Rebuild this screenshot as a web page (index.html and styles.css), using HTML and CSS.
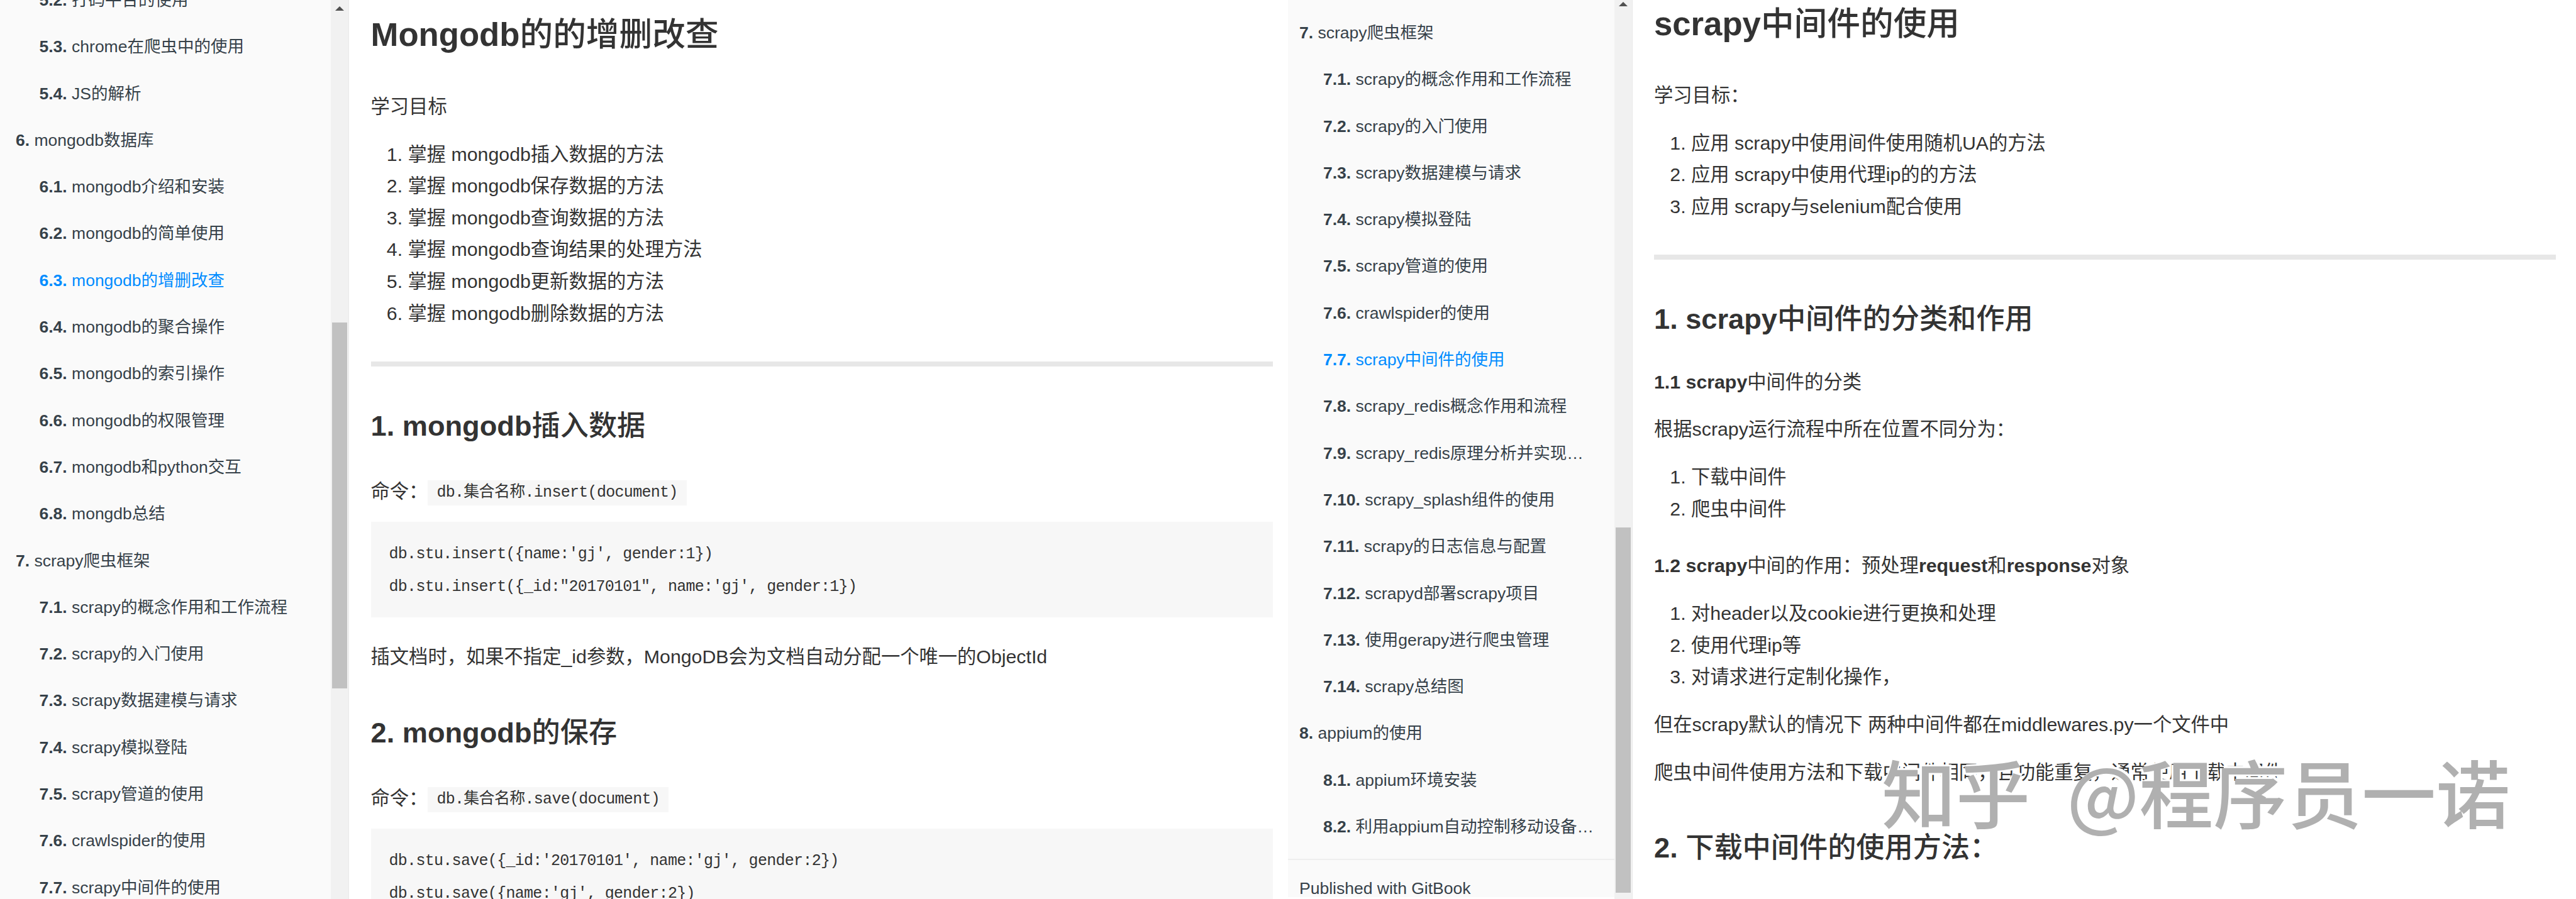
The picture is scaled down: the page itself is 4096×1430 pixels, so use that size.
FILE: index.html
```html
<!DOCTYPE html>
<html lang="zh">
<head>
<meta charset="utf-8">
<title>GitBook</title>
<link rel="stylesheet" href="styles.css">
</head>
<body>
<div class="page">
  <nav class="sidebar sidebar-left">
    <ul class="toc toc-left">
      <li class="sub"><b>5.2.</b> 打码平台的使用</li>
      <li class="sub"><b>5.3.</b> chrome在爬虫中的使用</li>
      <li class="sub"><b>5.4.</b> JS的解析</li>
      <li class="top"><b>6.</b> mongodb数据库</li>
      <li class="sub"><b>6.1.</b> mongodb介绍和安装</li>
      <li class="sub"><b>6.2.</b> mongodb的简单使用</li>
      <li class="sub active"><b>6.3.</b> mongodb的增删改查</li>
      <li class="sub"><b>6.4.</b> mongodb的聚合操作</li>
      <li class="sub"><b>6.5.</b> mongodb的索引操作</li>
      <li class="sub"><b>6.6.</b> mongodb的权限管理</li>
      <li class="sub"><b>6.7.</b> mongodb和python交互</li>
      <li class="sub"><b>6.8.</b> mongdb总结</li>
      <li class="top"><b>7.</b> scrapy爬虫框架</li>
      <li class="sub"><b>7.1.</b> scrapy的概念作用和工作流程</li>
      <li class="sub"><b>7.2.</b> scrapy的入门使用</li>
      <li class="sub"><b>7.3.</b> scrapy数据建模与请求</li>
      <li class="sub"><b>7.4.</b> scrapy模拟登陆</li>
      <li class="sub"><b>7.5.</b> scrapy管道的使用</li>
      <li class="sub"><b>7.6.</b> crawlspider的使用</li>
      <li class="sub"><b>7.7.</b> scrapy中间件的使用</li>
    </ul>
  </nav>
  <div class="track track-left"><i class="arrow arrow-left"></i><i class="thumb thumb-left"></i></div>

  <main class="content content-left">
    <h1>Mongodb<span class="cn">的的增删改查</span></h1>
    <p>学习目标</p>
    <ol class="goals">
      <li>掌握 mongodb插入数据的方法</li>
      <li>掌握 mongodb保存数据的方法</li>
      <li>掌握 mongodb查询数据的方法</li>
      <li>掌握 mongodb查询结果的处理方法</li>
      <li>掌握 mongodb更新数据的方法</li>
      <li>掌握 mongodb删除数据的方法</li>
    </ol>
    <hr>
    <h2>1. mongodb<span class="cn">插入数据</span></h2>
    <p class="before-pre">命令：<code>db.集合名称.insert(document)</code></p>
    <pre>db.stu.insert({name:'gj', gender:1})
db.stu.insert({_id:"20170101", name:'gj', gender:1})</pre>
    <p class="before-h2">插文档时，如果不指定_id参数，MongoDB会为文档自动分配一个唯一的ObjectId</p>
    <h2>2. mongodb<span class="cn">的保存</span></h2>
    <p class="before-pre">命令：<code>db.集合名称.save(document)</code></p>
    <pre>db.stu.save({_id:'20170101', name:'gj', gender:2})
db.stu.save({name:'gj', gender:2})</pre>
  </main>

  <nav class="sidebar sidebar-mid">
    <ul class="toc toc-mid">
      <li class="top"><b>7.</b> scrapy爬虫框架</li>
      <li class="sub"><b>7.1.</b> scrapy的概念作用和工作流程</li>
      <li class="sub"><b>7.2.</b> scrapy的入门使用</li>
      <li class="sub"><b>7.3.</b> scrapy数据建模与请求</li>
      <li class="sub"><b>7.4.</b> scrapy模拟登陆</li>
      <li class="sub"><b>7.5.</b> scrapy管道的使用</li>
      <li class="sub"><b>7.6.</b> crawlspider的使用</li>
      <li class="sub active"><b>7.7.</b> scrapy中间件的使用</li>
      <li class="sub"><b>7.8.</b> scrapy_redis概念作用和流程</li>
      <li class="sub"><b>7.9.</b> scrapy_redis原理分析并实现断点续爬</li>
      <li class="sub"><b>7.10.</b> scrapy_splash组件的使用</li>
      <li class="sub"><b>7.11.</b> scrapy的日志信息与配置</li>
      <li class="sub"><b>7.12.</b> scrapyd部署scrapy项目</li>
      <li class="sub"><b>7.13.</b> 使用gerapy进行爬虫管理</li>
      <li class="sub"><b>7.14.</b> scrapy总结图</li>
      <li class="top"><b>8.</b> appium的使用</li>
      <li class="sub"><b>8.1.</b> appium环境安装</li>
      <li class="sub"><b>8.2.</b> 利用appium自动控制移动设备并提取数据</li>
    </ul>
    <div class="published">Published with GitBook</div>
  </nav>
  <div class="track track-mid"><i class="arrow arrow-mid"></i><i class="thumb thumb-mid"></i></div>

  <main class="content content-right">
    <h1>scrapy<span class="cn">中间件的使用</span></h1>
    <p>学习目标：</p>
    <ol class="goals">
      <li>应用 scrapy中使用间件使用随机UA的方法</li>
      <li>应用 scrapy中使用代理ip的的方法</li>
      <li>应用 scrapy与selenium配合使用</li>
    </ol>
    <hr>
    <h2 class="before-h4">1. scrapy<span class="cn">中间件的分类和作用</span></h2>
    <h4>1.1 scrapy<span class="cn">中间件的分类</span></h4>
    <p>根据scrapy运行流程中所在位置不同分为：</p>
    <ol class="before-h4-list">
      <li>下载中间件</li>
      <li>爬虫中间件</li>
    </ol>
    <h4>1.2 scrapy<span class="cn">中间的作用：预处理</span>request<span class="cn">和</span>response<span class="cn">对象</span></h4>
    <ol>
      <li>对header以及cookie进行更换和处理</li>
      <li>使用代理ip等</li>
      <li>对请求进行定制化操作，</li>
    </ol>
    <p>但在scrapy默认的情况下 两种中间件都在middlewares.py一个文件中</p>
    <p class="before-h2">爬虫中间件使用方法和下载中间件相同，且功能重复，通常使用下载中间件</p>
    <h2>2. <span class="cn">下载中间件的使用方法：</span></h2>
    <div class="watermark">知乎 @程序员一诺</div>
  </main>
</div>
</body>
</html>
```

FILE: styles.css
```css
* { box-sizing: border-box; }
html, body { margin: 0; padding: 0; background: #fff; }
body {
  font-family: "Liberation Sans", "Noto Sans CJK SC", sans-serif;
  color: #333;
  overflow: hidden;
}
.page {
  display: grid;
  grid-template-columns: 526px 29px 1493px 519px 29px 1500px;
  width: 4096px;
  height: 1430px;
  overflow: hidden;
}

/* sidebars */
.sidebar {
  background: #fafafa;
  color: #364149;
  overflow: hidden;
  font-size: 26.5px;
}
.sidebar-mid { height: 1427px; }
.toc { list-style: none; margin: 0; padding: 0; }
.toc li {
  height: 74.3px;
  line-height: 74.3px;
  white-space: nowrap;
  overflow: hidden;
  text-overflow: ellipsis;
}
.toc-left { margin-top: -37px; padding-right: 20px; }
.toc-left .top { padding-left: 25px; }
.toc-left .sub { padding-left: 62.5px; }
.toc-mid { padding-top: 15px; padding-right: 30px; }
.toc-mid .top { padding-left: 18px; }
.toc-mid .sub { padding-left: 56px; }
.toc .active { color: #008cff; }
.published {
  margin-top: 14px;
  border-top: 2px solid #eeeeee;
  padding: 20px 18px 0;
  line-height: 50px;
}

/* scrollbars */
.track {
  background: #f1f1f1;
  border-right: 1px solid #e9e9e9;
  display: flex;
  flex-direction: column;
  align-items: center;
}
.arrow {
  width: 0;
  height: 0;
  border-left: 7px solid transparent;
  border-right: 7px solid transparent;
  border-bottom: 7px solid #505050;
}
.arrow-left { margin-top: 10px; }
.arrow-mid { margin-top: 3px; }
.thumb { width: 24px; background: #c1c1c1; }
.thumb-left { margin-top: 496px; height: 582px; }
.thumb-mid { margin-top: 829px; height: 581px; }

/* article */
.content { position: relative; overflow: hidden; font-size: 30.3px; line-height: 50.6px; }
.content-left { padding: 16px 24px 0 34.5px; }
.content-right { padding: 0 32px 0 34px; }
h1 { margin: 0 0 50.7px; font-size: 52.7px; line-height: 78px; font-weight: 700; }
.content-right h1 { line-height: 76px; }
h2 { margin: 0 0 45.4px; font-size: 45.2px; line-height: 66.6px; font-weight: 700; }
h2.before-h4 { margin-bottom: 41px; }
h4 { margin: 0 0 25px; font-size: 30.3px; font-weight: 700; }
h1 .cn, h2 .cn { font-weight: 500; }
h4 .cn { font-weight: 400; }
p { margin: 0 0 25.4px; }
p.before-pre { margin-bottom: 22.7px; }
p.before-h2 { margin-bottom: 62px; }
ol { margin: 0 0 25px; padding: 0 0 0 59px; }
ol.goals { margin-bottom: 51px; }
ol.before-h4-list { margin-bottom: 40px; }
hr { margin: 0 0 61.5px; height: 8px; border: 0; background: #e7e7e7; }
code, pre { font-family: "Liberation Mono", "Noto Sans CJK SC", monospace; letter-spacing: -0.7px; }
code {
  display: inline-block;
  height: 40px;
  line-height: 40px;
  padding: 0 14px;
  font-size: 25px;
  background: #f7f7f7;
  vertical-align: middle;
}
pre {
  margin: 0 0 38.3px;
  padding: 26px 29px 22px;
  background: #f7f7f7;
  font-size: 25px;
  line-height: 52px;
}
.watermark {
  position: absolute;
  left: 396px;
  top: 1188px;
  font-family: "Noto Sans CJK SC", sans-serif;
  font-size: 118px;
  font-weight: 500;
  line-height: 140px;
  word-spacing: 32px;
  white-space: nowrap;
  color: #b0b0b0;
  text-shadow: 3px -3px 0 #fff, -3px 3px 0 #fff;
}
```
